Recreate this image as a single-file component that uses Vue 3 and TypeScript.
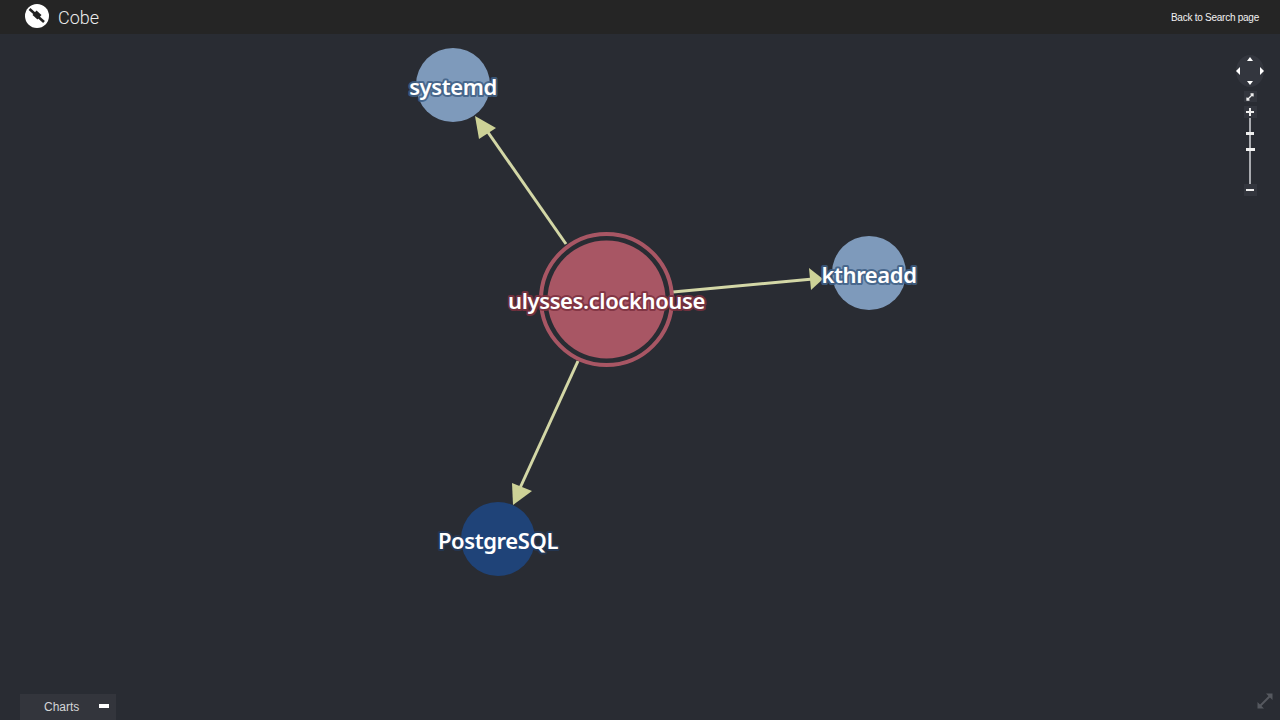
<script setup lang="ts">
interface GraphNode { x: number; y: number; r: number; label: string; fill: string; halo: string; haloOpacity: number; labelY: number }
const nodes: GraphNode[] = [
  { x: 453, y: 85, r: 37, label: 'systemd', fill: '#7e9abb', halo: '#3f5f85', haloOpacity: 0.85, labelY: 95 },
  { x: 869, y: 273, r: 37, label: 'kthreadd', fill: '#7e9abb', halo: '#3f5f85', haloOpacity: 0.85, labelY: 283 },
  { x: 498, y: 539, r: 37, label: 'PostgreSQL', fill: '#1f4378', halo: '#1f4378', haloOpacity: 0.45, labelY: 549 },
  { x: 606.5, y: 299.5, r: 59, label: 'ulysses.clockhouse', fill: '#a85664', halo: '#7d3140', haloOpacity: 0.85, labelY: 309 },
]
const edges = [
  { x1: 566, y1: 244, x2: 485, y2: 128 },
  { x1: 673, y1: 292, x2: 813, y2: 279 },
  { x1: 578, y1: 361, x2: 520, y2: 488 },
]
const arrows = ['475,116 496,128 479,139', '823,279 809,268 811,290', '513,505 512,483 532,491']
</script>

<template>
  <div class="page">
    <header class="topbar">
      <div class="brand">
        <svg class="logo" viewBox="0 0 24 24" width="24" height="24">
          <circle cx="12" cy="12" r="12" fill="#fff" />
          <path d="M4.500 5 L19 18" stroke="#222" stroke-width="2.600" />
          <path d="M7.500 11 L11.500 6.500 L16.500 11 L12.500 15.500 Z" fill="#222" />
        </svg>
        <span class="brand-name">Cobe</span>
      </div>
      <a class="back">Back to Search page</a>
    </header>

    <main class="stage">
      <svg class="graph" viewBox="0 0 1280 720" width="1280" height="720">
        <line v-for="(e, i) in edges" :key="i" :x1="e.x1" :y1="e.y1" :x2="e.x2" :y2="e.y2" stroke="#d3d7a6" stroke-width="3" />
        <polygon v-for="p in arrows" :key="p" :points="p" fill="#cdd297" />
        <circle cx="606.500" cy="299.500" r="65.500" fill="none" stroke="#a85664" stroke-width="4" />
        <circle v-for="n in nodes" :key="n.label" :cx="n.x" :cy="n.y" :r="n.r" :fill="n.fill" />
        <text
          v-for="n in nodes"
          :key="'t' + n.label"
          :x="n.x"
          :y="n.labelY"
          text-anchor="middle"
          class="label"
          :stroke="n.halo"
          :stroke-opacity="n.haloOpacity"
        >{{ n.label }}</text>
      </svg>

      <div class="nav">
        <div class="pad">
          <span class="tri up"></span>
          <div class="tri-row"><span class="tri left"></span><span class="tri right"></span></div>
          <span class="tri down"></span>
        </div>
        <div class="tool fit">
          <svg viewBox="0 0 10 10" width="10" height="10"><path d="M2 8 L8 2 M5.500 2 H8 V4.500 M2 5.500 V8 H4.500" stroke="#eee" stroke-width="1.300" fill="none" /></svg>
        </div>
        <div class="tool plus"><span class="h"></span><span class="v"></span></div>
        <div class="track">
          <span class="stop"></span>
          <span class="thumb"></span>
        </div>
        <div class="tool minus"><span class="h"></span></div>
      </div>

      <div class="charts">
        <span class="charts-label">Charts</span>
        <span class="charts-toggle"></span>
      </div>

      <svg class="expand" viewBox="0 0 18 18" width="18" height="18">
        <path d="M3.500 14.500 L14.500 3.500" stroke="#55585f" stroke-width="2" />
        <path d="M10 1.500 H16.500 V8 Z M1.500 10 V16.500 H8 Z" fill="#55585f" />
      </svg>
    </main>
  </div>
</template>

<style scoped>
.page {
  width: 1280px;
  height: 720px;
  display: flex;
  flex-direction: column;
  background: #292c33;
  overflow: hidden;
  font-family: "Liberation Sans", Arial, sans-serif;
}
.topbar {
  height: 34px;
  flex: none;
  background: #252525;
  display: flex;
  align-items: center;
  justify-content: space-between;
  padding: 0 21px 0 25px;
  z-index: 1;
}
.brand { display: flex; align-items: center; gap: 9px; }
.logo { display: block; margin-top: -2px; }
.brand-name {
  font-family: Roboto, sans-serif;
  font-weight: 300;
  font-size: 18px;
  color: #ececec;
}
.back { font-size: 10px; letter-spacing: -0.25px; color: #f2f2f2; }
.stage { position: relative; flex: 1; }
.graph { position: absolute; left: 0; top: -34px; }
.label {
  font-family: "Noto Sans", sans-serif;
  font-weight: 600;
  font-size: 22px;
  letter-spacing: -0.4px;
  fill: #fff;
  stroke-width: 4px;
  stroke-linejoin: round;
  paint-order: stroke;
}
.nav {
  position: absolute;
  top: 21px;
  right: 16px;
  width: 28px;
  display: flex;
  flex-direction: column;
  align-items: center;
}
.pad {
  width: 28px;
  height: 32px;
  padding: 2px 0;
  box-sizing: border-box;
  border-radius: 50%;
  background: #33363e;
  display: flex;
  flex-direction: column;
  align-items: center;
  justify-content: space-between;
}
.tri-row { width: 28px; display: flex; justify-content: space-between; }
.tri { width: 0; height: 0; border-style: solid; border-color: transparent; display: block; }
.tri.up { border-width: 0 3.500px 4px; border-bottom-color: #fff; }
.tri.down { border-width: 4px 3.500px 0; border-top-color: #fff; }
.tri.left { border-width: 4px 4px 4px 0; border-right-color: #fff; }
.tri.right { border-width: 4px 0 4px 4px; border-left-color: #fff; }
.tool {
  position: relative;
  width: 13px;
  height: 12px;
  background: #33363e;
  display: flex;
  align-items: center;
  justify-content: center;
}
.tool .h { position: absolute; width: 8px; height: 2.500px; background: #eee; }
.tool .v { position: absolute; width: 2.500px; height: 8px; background: #eee; }
.fit { margin-top: 4px; height: 11px; }
.plus { margin-top: 4px; }
.track {
  position: relative;
  width: 2px;
  height: 67px;
  background: #a9abb0;
}
.stop, .thumb { position: absolute; height: 3px; background: #eee; }
.stop { top: 14px; left: -3px; width: 8px; }
.thumb { top: 30px; left: -3px; width: 9px; background: #f2f2f2; }
.minus { margin-top: -1px; }
.charts {
  position: absolute;
  left: 20px;
  bottom: 0;
  width: 96px;
  height: 26px;
  background: #33353c;
  display: flex;
  align-items: center;
  justify-content: space-between;
  padding: 0 7px 0 24px;
  box-sizing: border-box;
}
.charts-label { font-size: 12px; color: #d5d6d8; }
.charts-toggle { width: 10px; height: 4px; background: #fff; margin-top: -2px; }
.expand { position: absolute; right: 6px; bottom: 10px; }
</style>
